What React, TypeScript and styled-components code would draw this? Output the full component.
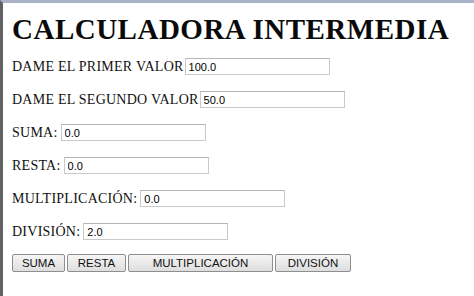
import styled, { createGlobalStyle } from 'styled-components'

const GlobalStyle = createGlobalStyle`
  html, body {
    margin: 0;
    padding: 0;
    background: #ffffff;
  }
`

const Frame = styled.div`
  box-sizing: border-box;
  width: 474px;
  height: 296px;
  border-top: 3px solid #a9b2c8;
  border-left: 3px solid #626262;
  padding: 11px 0 0 9px;
  background: #ffffff;
  overflow: hidden;
`

const Title = styled.h1`
  margin: 0 0 6px 0;
  font-family: "Liberation Serif", "Times New Roman", serif;
  font-weight: 700;
  font-size: 29px;
  line-height: 30px;
  color: #0a0a0a;
  letter-spacing: 0.5px;
`

const Form = styled.div`
  display: flex;
  flex-direction: column;
`

const Row = styled.div`
  display: flex;
  align-items: center;
  height: 33px;
`

// labels ending in a colon are followed by a space in the original form
const Label = styled.span<{ $spaced?: boolean }>`
  font-family: "Liberation Serif", "Times New Roman", serif;
  font-size: 14px;
  letter-spacing: 0.25px;
  color: #111111;
  margin-right: ${p => (p.$spaced ? 3 : 1)}px;
`

const Field = styled.input`
  box-sizing: border-box;
  width: 145px;
  height: 17px;
  padding: 0 3px;
  border: 1px solid #c9c9c9;
  border-top-color: #b5b5b5;
  font-family: "Liberation Sans", Arial, sans-serif;
  font-size: 11px;
  color: #000000;
  background: #ffffff;
  outline: none;
`

const Buttons = styled.div`
  display: flex;
  gap: 2px;
  margin-top: 6px;
`

const Button = styled.button<{ $w: number }>`
  box-sizing: border-box;
  width: ${p => p.$w}px;
  height: 18px;
  padding: 0;
  border: 1px solid #8e8e8e;
  border-radius: 2px;
  background: linear-gradient(#f6f6f6, #dedede);
  font-family: "Liberation Sans", Arial, sans-serif;
  font-size: 11.5px;
  color: #111111;
`

const fields = [
  { label: 'DAME EL PRIMER VALOR', value: '100.0' },
  { label: 'DAME EL SEGUNDO VALOR', value: '50.0' },
  { label: 'SUMA:', value: '0.0' },
  { label: 'RESTA:', value: '0.0' },
  { label: 'MULTIPLICACIÓN:', value: '0.0' },
  { label: 'DIVISIÓN:', value: '2.0' },
]

const buttons = [
  { text: 'SUMA', w: 53 },
  { text: 'RESTA', w: 59 },
  { text: 'MULTIPLICACIÓN', w: 145 },
  { text: 'DIVISIÓN', w: 76 },
]

export default function App() {
  return (
    <>
      <GlobalStyle />
      <Frame>
        <Title>CALCULADORA INTERMEDIA</Title>
        <Form>
          {fields.map(f => (
            <Row key={f.label}>
              <Label $spaced={f.label.endsWith(':')}>{f.label}</Label>
              <Field defaultValue={f.value} />
            </Row>
          ))}
          <Buttons>
            {buttons.map(b => (
              <Button key={b.text} $w={b.w}>{b.text}</Button>
            ))}
          </Buttons>
        </Form>
      </Frame>
    </>
  )
}
